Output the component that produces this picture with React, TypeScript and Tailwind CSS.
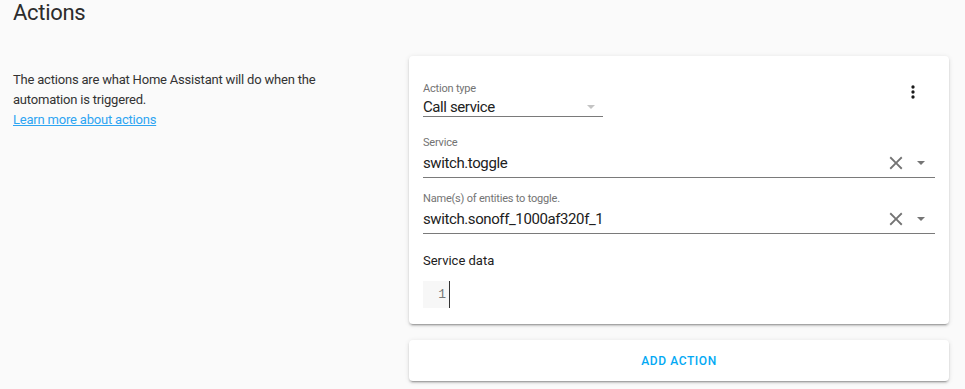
import React from "react";

const cardShadow =
  "shadow-[0_2px_2px_0_rgba(0,0,0,0.14),0_1px_5px_0_rgba(0,0,0,0.12),0_3px_1px_-2px_rgba(0,0,0,0.2)]";

function CloseIcon() {
  return (
    <svg width="22" height="22" viewBox="0 0 24 24" className="shrink-0">
      <path
        fill="#737373"
        d="M19,6.41L17.59,5L12,10.59L6.41,5L5,6.41L10.59,12L5,17.59L6.41,19L12,13.41L17.59,19L19,17.59L13.41,12L19,6.41Z"
      />
    </svg>
  );
}

function Caret({ color }: { color: string }) {
  return (
    <svg width="8" height="4" viewBox="0 0 8 4" className="shrink-0">
      <polygon points="0,0 8,0 4,4" fill={color} />
    </svg>
  );
}

function ComboField({ label, value, className }: { label: string; value: string; className?: string }) {
  return (
    <div className={className}>
      <div className="text-[11px] leading-[14px] tracking-[-0.2px] text-[#737373]">{label}</div>
      <div className="flex items-center h-[28px] pb-[2px] border-b border-[#7a7a7a]">
        <span className="text-[15px] leading-[20px] tracking-[-0.4px] text-[#212121] flex-1">{value}</span>
        <CloseIcon />
        <span className="ml-[10px] mr-[10px] flex">
          <Caret color="#757575" />
        </span>
      </div>
    </div>
  );
}

export default function App() {
  return (
    <div className="min-h-[389px] bg-[#fafafa] font-['Roboto',sans-serif] overflow-hidden">
      <h1 className="pl-[13px] text-[22px] leading-[26px] tracking-[-0.3px] font-normal text-[#2c2c2c]">
        Actions
      </h1>
      <div className="flex pl-[13px] pr-[16px] mt-[30px]">
        <div className="w-[396px] shrink-0 pt-[14px] text-[13px] leading-[20px] tracking-[-0.2px] text-[#333]">
          <div>The actions are what Home Assistant will do when the</div>
          <div>automation is triggered.</div>
          <a href="#" className="text-[#2ea5f2] underline">
            Learn more about actions
          </a>
        </div>
        <div className="flex-1">
          <div className={`relative bg-white rounded-[4px] ${cardShadow} px-[14px] pt-[25px] pb-[16px]`}>
            <svg
              width="20"
              height="20"
              viewBox="0 0 24 24"
              className="absolute top-[26px] right-[26px]"
            >
              <path
                fill="#1a1a1a"
                d="M12,16A2,2 0 0,1 14,18A2,2 0 0,1 12,20A2,2 0 0,1 10,18A2,2 0 0,1 12,16M12,10A2,2 0 0,1 14,12A2,2 0 0,1 12,14A2,2 0 0,1 10,12A2,2 0 0,1 12,10M12,4A2,2 0 0,1 14,6A2,2 0 0,1 12,8A2,2 0 0,1 10,6A2,2 0 0,1 12,4Z"
              />
            </svg>
            <div className="w-[180px]">
              <div className="text-[11px] leading-[16px] tracking-[-0.2px] text-[#737373]">Action type</div>
              <div className="flex items-center h-[20px] border-b border-[#7a7a7a]">
                <span className="text-[15px] leading-[20px] tracking-[-0.4px] text-[#212121] flex-1">
                  Call service
                </span>
                <span className="mr-[8px] flex">
                  <Caret color="#c4c4c4" />
                </span>
              </div>
            </div>
            <ComboField className="mt-[19px]" label="Service" value="switch.toggle" />
            <ComboField className="mt-[14px]" label="Name(s) of entities to toggle." value="switch.sonoff_1000af320f_1" />
            <div className="mt-[17px] text-[13px] leading-[20px] text-[#212121]">Service data</div>
            <div className="mt-[10px] flex h-[27px]">
              <div className="w-[26px] bg-[#f7f7f7] text-right pr-[3px] font-['Liberation_Mono',monospace] text-[13px] leading-[27px] text-[#777]">
                1
              </div>
              <div className="w-px bg-[#333]" />
            </div>
          </div>
          <div
            className={`mt-[16px] h-[41px] bg-white rounded-[4px] ${cardShadow} flex items-center justify-center text-[12px] font-medium tracking-[0.6px] text-[#03a9f4]`}
          >
            ADD ACTION
          </div>
        </div>
      </div>
    </div>
  );
}
